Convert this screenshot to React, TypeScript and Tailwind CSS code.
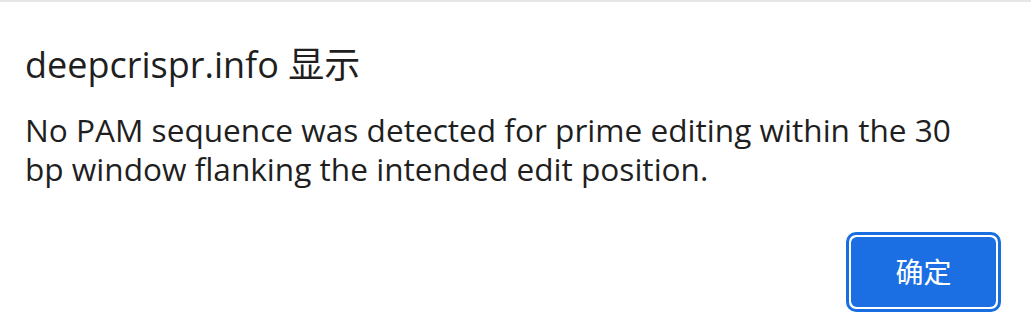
export default function App() {
  return (
    <div className="w-[1031px] h-[333px] bg-white border-t-2 border-[#e6e6e6] text-[#1f1f1f] font-['Open_Sans','Noto_Sans_CJK_SC',sans-serif]">
      <div className="pl-[25px] pr-[30px] pt-[39px]">
        <h1 className="text-[36px] leading-[48px] font-normal">deepcrispr.info 显示</h1>
        <p className="mt-[21px] text-[31.6px] leading-[39px] w-[945px]">
          No PAM sequence was detected for prime editing within the 30 bp window flanking the intended edit position.
        </p>
        <div className="flex justify-end mt-[44px]">
          <button className="w-[155px] h-[80px] rounded-[10px] border-[3px] border-[#1a6fe0] p-[2px] bg-white">
            <span className="flex h-full w-full items-center justify-center rounded-[6px] bg-[#1b6fe3] text-white text-[28px]">确定</span>
          </button>
        </div>
      </div>
    </div>
  );
}
